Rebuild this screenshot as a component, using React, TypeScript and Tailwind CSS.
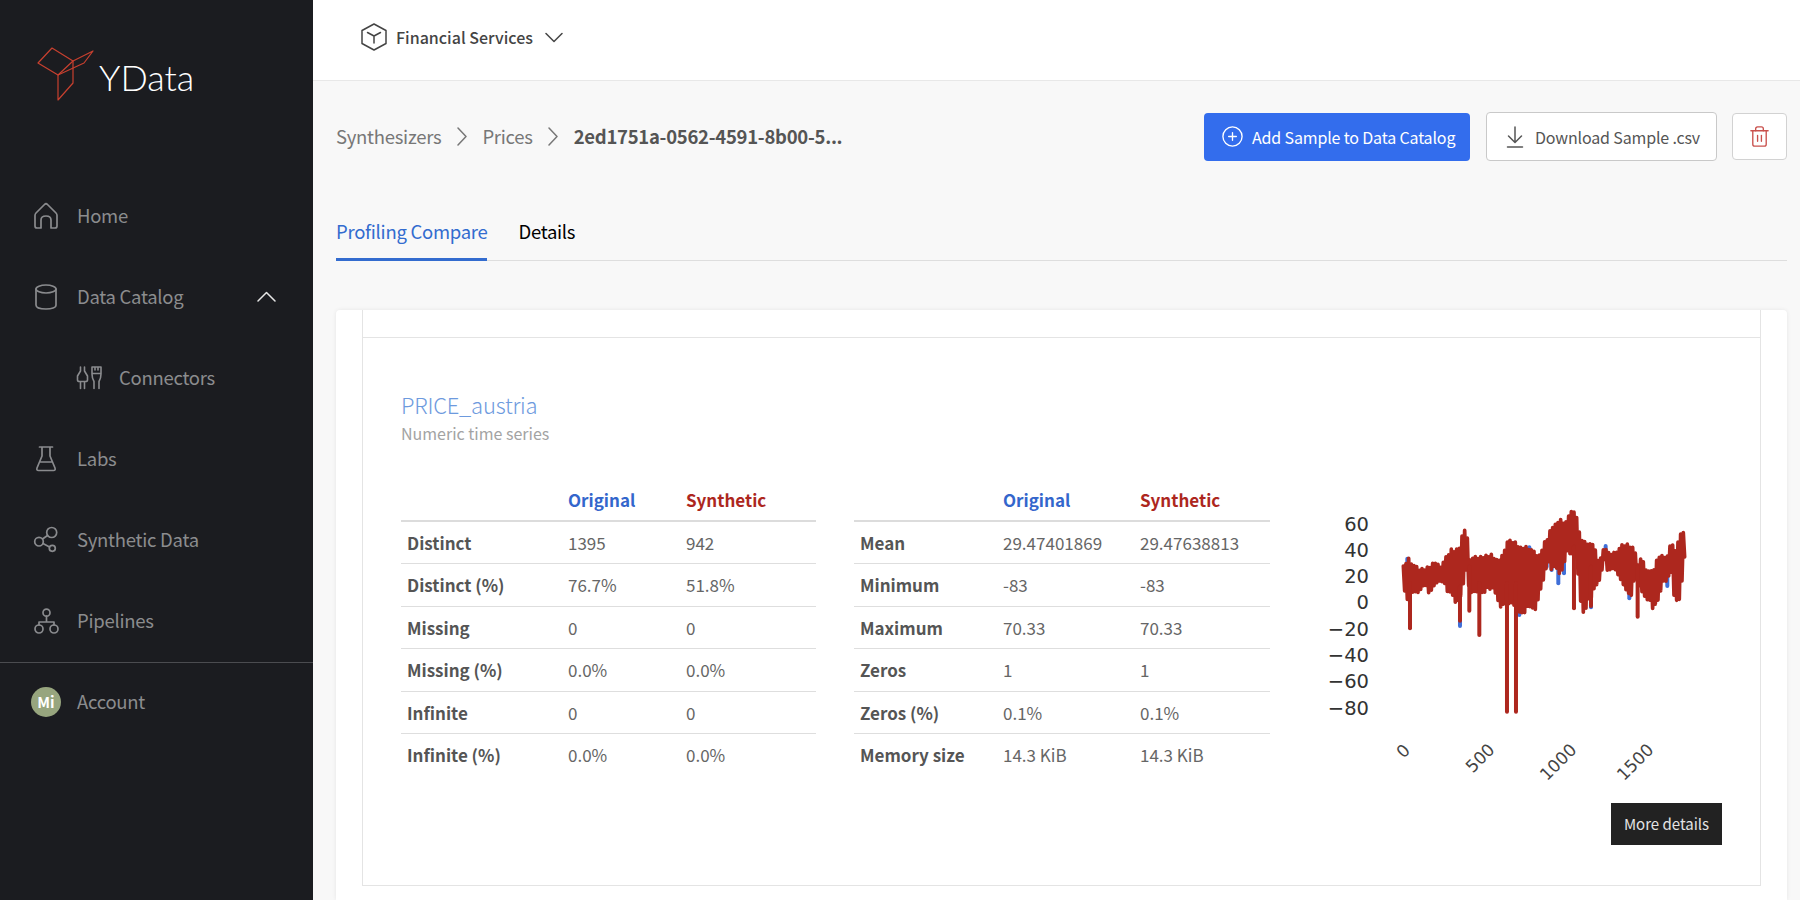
import { CirclePlus, Trash2 } from "lucide-react";

const navClass = "flex h-[81px] items-center text-[18.5px] tracking-[-0.015em] text-[#8b8c8e]";
const crumbClass = "text-[18.5px] tracking-[-0.015em] text-[#777]";

// top and bottom of the price band, in chart units
const band: [number, number, number][] = [
  [70, 200, 280], [85, 175, 290], [100, 195, 270], [115, 210, 280], [130, 210, 265], [150, 200, 270],
  [165, 185, 250], [180, 200, 245], [195, 180, 260], [215, 150, 270], [225, 155, 305], [240, 140, 300],
  [252, 80, 250], [262, 115, 200], [268, 175, 270], [285, 175, 270], [298, 175, 280], [315, 170, 285],
  [335, 165, 250], [350, 180, 285], [360, 175, 325], [375, 155, 315], [382, 125, 300], [395, 125, 300],
  [408, 130, 320], [420, 145, 340], [435, 140, 345], [450, 145, 310], [467, 165, 325], [480, 170, 275],
  [490, 135, 245], [503, 115, 195], [515, 80, 200], [525, 75, 190], [540, 55, 225], [550, 75, 205],
  [565, 55, 150], [575, 30, 150], [590, 50, 170], [600, 110, 295], [612, 125, 350], [628, 130, 300],
  [645, 145, 250], [655, 190, 250], [675, 140, 180], [685, 160, 235], [700, 160, 190], [725, 140, 245],
  [740, 135, 280], [750, 140, 295], [765, 150, 220], [773, 200, 240], [783, 170, 270], [800, 210, 305],
  [818, 220, 315], [835, 170, 295], [850, 170, 245], [862, 170, 250], [872, 125, 215], [885, 150, 295],
  [900, 110, 295], [915, 90, 165],
];

const spikes: [number, number, number][] = [
  [90, 250, 385], [240, 260, 362], [268, 200, 332], [298, 250, 405], [381, 250, 635], [408, 250, 635],
  [582, 140, 325], [633, 200, 318], [773, 200, 350],
];

const blueMarks: [number, number, number][] = [
  [240, 350, 378], [82, 176, 200], [403, 128, 160], [392, 270, 305], [418, 310, 345], [535, 200, 250],
  [515, 170, 210], [500, 150, 200], [748, 270, 295], [633, 300, 322], [862, 230, 258], [677, 138, 170],
  [448, 142, 170], [552, 190, 220],
];

function bandPath() {
  let d = "";
  let up = true;
  for (let x = 70; x <= 915; x += 4) {
    const i = band.findIndex((p) => p[0] >= x);
    const b = band[i];
    const a = band[Math.max(i - 1, 0)];
    const t = b[0] === a[0] ? 0 : (x - a[0]) / (b[0] - a[0]);
    // small fixed jitter so the edges of the band look like data
    const y = up
      ? a[1] + (b[1] - a[1]) * t + ((x * 53) % 11) - 5
      : a[2] + (b[2] - a[2]) * t + ((x * 37) % 23) - 11;
    d += `${d ? "L" : "M"}${x} ${y.toFixed(1)}`;
    up = !up;
  }
  return d;
}

function Chart() {
  const yTicks = ["60", "40", "20", "0", "−20", "−40", "−60", "−80"];
  const xTicks: [string, number, number][] = [
    ["0", 103, 272],
    ["500", 180, 279],
    ["1000", 258, 283],
    ["1500", 335, 283],
  ];
  return (
    <svg width="400" height="324" className="ml-[30px] shrink-0" style={{ fontFamily: "'DejaVu Sans', sans-serif" }}>
      {yTicks.map((t, i) => (
        <text key={t} x="69" y={45 + i * 26.3} fontSize="19.5" fill="#333" textAnchor="end" dominantBaseline="central">
          {t}
        </text>
      ))}
      {xTicks.map(([t, x, y]) => (
        <text key={t} x={x} y={y} fontSize="17" fill="#444" textAnchor="middle" dominantBaseline="central" transform={`rotate(-45 ${x} ${y})`}>
          {t}
        </text>
      ))}
      <g transform="translate(80 21) scale(0.3333)" fill="none" strokeLinecap="round" strokeLinejoin="round">
        {blueMarks.map(([x, a, b]) => (
          <path key={`${x}-${a}`} d={`M${x} ${a}L${x} ${b}`} stroke="#3f6fd8" strokeWidth="12" />
        ))}
        <path d={bandPath()} stroke="#ad271e" strokeWidth="11" />
        {spikes.map(([x, a, b]) => (
          <path key={x} d={`M${x} ${a}L${x} ${b}`} stroke="#ad271e" strokeWidth="12" />
        ))}
      </g>
    </svg>
  );
}

function StatsTable({ rows, className }: { rows: string[][]; className: string }) {
  return (
    <table className={`border-collapse text-[17px] ${className}`}>
      <thead>
        <tr className="h-[42px] border-b-2 border-[#dcdcdc]">
          <th />
          <th className="text-left font-bold text-[#3366cc]">Original</th>
          <th className="text-left font-bold text-[#ad271e]">Synthetic</th>
        </tr>
      </thead>
      <tbody>
        {rows.map((r) => (
          <tr key={r[0]} className="h-[42.5px] border-b border-[#dedede] last:border-b-0">
            <td className="pl-[6px] font-bold text-[#555]">{r[0]}</td>
            <td className="text-[#666]">{r[1]}</td>
            <td className="text-[#666]">{r[2]}</td>
          </tr>
        ))}
      </tbody>
    </table>
  );
}

const leftRows = [
  ["Distinct", "1395", "942"],
  ["Distinct (%)", "76.7%", "51.8%"],
  ["Missing", "0", "0"],
  ["Missing (%)", "0.0%", "0.0%"],
  ["Infinite", "0", "0"],
  ["Infinite (%)", "0.0%", "0.0%"],
];

const rightRows = [
  ["Mean", "29.47401869", "29.47638813"],
  ["Minimum", "-83", "-83"],
  ["Maximum", "70.33", "70.33"],
  ["Zeros", "1", "1"],
  ["Zeros (%)", "0.1%", "0.1%"],
  ["Memory size", "14.3 KiB", "14.3 KiB"],
];

function Chevron({ d, w, h, color }: { d: string; w: number; h: number; color: string }) {
  return (
    <svg width={w} height={h} viewBox={`0 0 ${w} ${h}`} fill="none" stroke={color} strokeWidth="1.5" strokeLinecap="round" strokeLinejoin="round">
      <path d={d} />
    </svg>
  );
}

function NavIcon({ children }: { children: React.ReactNode }) {
  return (
    <svg width="26" height="28" viewBox="0 0 26 28" fill="none" stroke="#8a8b8e" strokeWidth="1.7" strokeLinecap="round" strokeLinejoin="round" className="shrink-0">
      {children}
    </svg>
  );
}

export default function App() {
  return (
    <div className="flex h-[900px] w-[1800px] overflow-hidden bg-[#f8f8f8] font-['Noto_Sans_CJK_JP','Noto_Sans',sans-serif]">
      <aside className="w-[313px] shrink-0 bg-[#1b1c20]">
        <div className="flex h-[175.5px] items-start pl-[37px] pt-[47px]">
          <svg width="58" height="54" viewBox="0 0 58 54" fill="none" stroke="#c8402f" strokeWidth="1.2" strokeLinejoin="round">
            <path d="M1 16L15 1L36 14L21 28Z" />
            <path d="M36 14L56 4L47 16L21 28" />
            <path d="M21 28V53L36 36V14" />
          </svg>
          <span className="ml-[4px] mt-[10px] font-['Lato',sans-serif] text-[36px] font-light leading-[40px] text-white">YData</span>
        </div>

        <nav className="border-b border-[#4b4c50]">
          <div className={`${navClass} pl-[33px]`}>
            <NavIcon>
              <path d="M2 13.500Q2 12 3 11L11.500 2.500Q13 1 14.500 2.500L23 11Q24 12 24 13.500V24Q24 26 22 26H18V18Q18 14 13 14Q8 14 8 18V26H4Q2 26 2 24Z" />
            </NavIcon>
            <span className="ml-[18px]">Home</span>
          </div>
          <div className={`${navClass} pl-[33px]`}>
            <NavIcon>
              <ellipse cx="13" cy="6" rx="10" ry="4" />
              <path d="M3 6V22C3 24.500 7.500 26 13 26C18.500 26 23 24.500 23 22V6" />
            </NavIcon>
            <span className="ml-[18px]">Data Catalog</span>
            <span className="ml-[74px] flex">
              <Chevron d="M1 10L9.500 1.500L18 10" w={19} h={12} color="#e6e6e6" />
            </span>
          </div>
          <div className={`${navClass} pl-[76px]`}>
            <svg width="27" height="24" viewBox="0 0 27 24" fill="none" stroke="#8a8b8e" strokeWidth="1.6" strokeLinecap="round" strokeLinejoin="round" className="shrink-0">
              <path d="M4.500 1V5M8.500 1V5M4.500 5L1.500 10V14Q1.500 15.500 3.500 15.500H9.500Q11.500 15.500 11.500 14V10L8.500 5M4.500 15.500V22.500M8.500 15.500V22.500" />
              <path d="M16 1H25V8Q25 12 23 15.500V22.500M16 1V8Q16 12 18 15.500V22.500M16 7.500H25M19 1V4M22 1V4" />
            </svg>
            <span className="ml-[16px]">Connectors</span>
          </div>
          <div className={`${navClass} pl-[33px]`}>
            <NavIcon>
              <path d="M6.500 2H19.500M9 2V11L4 23C3.500 24.500 4 25.500 5.500 25.500H20.500C22 25.500 22.500 24.500 22 23L17 11V2M6.500 17H19.500" />
            </NavIcon>
            <span className="ml-[18px]">Labs</span>
          </div>
          <div className={`${navClass} pl-[33px]`}>
            <NavIcon>
              <circle cx="6" cy="15.700" r="4.300" />
              <circle cx="18.700" cy="6.500" r="5" />
              <circle cx="19.300" cy="22.300" r="3" />
              <path d="M9.500 13L14.500 9.500M10 17.500L16.500 21" />
            </NavIcon>
            <span className="ml-[18px]">Synthetic Data</span>
          </div>
          <div className={`${navClass} pl-[33px]`}>
            <NavIcon>
              <circle cx="13.500" cy="5.700" r="3.500" />
              <circle cx="6" cy="22" r="4" />
              <circle cx="21" cy="22" r="4" />
              <path d="M13.500 9.200V15M6 18V15H21V18" />
            </NavIcon>
            <span className="ml-[18px]">Pipelines</span>
          </div>
        </nav>

        <div className={`${navClass} pb-[2px] pl-[31px]`}>
          <span className="flex h-[30px] w-[30px] items-center justify-center rounded-full bg-[#97a57e] text-[15px] font-bold tracking-normal text-white">Mi</span>
          <span className="ml-[16px]">Account</span>
        </div>
      </aside>

      <main className="flex min-w-0 flex-1 flex-col">
        <header className="flex h-[81px] shrink-0 items-center border-b border-[#e8e8e8] bg-white pb-[6px] pl-[48px]">
          <svg width="26" height="28" viewBox="0 0 26 28" fill="none" stroke="#444" strokeWidth="1.5" strokeLinejoin="round" strokeLinecap="round">
            <path d="M13 1L25 7.500V20.500L13 27L1 20.500V7.500Z" />
            <path d="M6.500 9.500L13 13L19.500 9.500M13 13V20" />
          </svg>
          <span className="ml-[9px] text-[16px] font-medium text-[#444]">Financial Services</span>
          <span className="ml-[12px] flex">
            <Chevron d="M1 1.500L9 9.500L17 1.500" w={18} h={11} color="#444" />
          </span>
        </header>

        <div className="flex flex-1 flex-col pl-[23px] pr-[13px] pt-[31px]">
          <div className="flex items-center">
            <span className={crumbClass}>Synthesizers</span>
            <span className="ml-[16px] flex">
              <Chevron d="M1 1L9 9.500L1 18" w={10} h={19} color="#777" />
            </span>
            <span className={`${crumbClass} ml-[15px]`}>Prices</span>
            <span className="ml-[15px] flex">
              <Chevron d="M1 1L9 9.500L1 18" w={10} h={19} color="#777" />
            </span>
            <span className="ml-[16px] text-[18.5px] font-bold tracking-[-0.015em] text-[#555]">2ed1751a-0562-4591-8b00-5...</span>

            <button className="ml-auto flex h-[48px] w-[266px] items-center whitespace-nowrap rounded-[4px] bg-[#336ded] pl-[17px] text-[16px] tracking-[-0.01em] text-white">
              <CirclePlus size={23} strokeWidth={1.4} />
              <span className="ml-[8px]">Add Sample to Data Catalog</span>
            </button>
            <button className="ml-[16px] flex h-[49px] w-[231px] items-center whitespace-nowrap rounded-[4px] border border-[#c9c9c9] bg-white pl-[19px] text-[16px] tracking-[-0.01em] text-[#555]">
              <svg width="18" height="22" viewBox="0 0 18 22" fill="none" stroke="#555" strokeWidth="1.5" strokeLinecap="round" strokeLinejoin="round">
                <path d="M9 1V16M2.500 10L9 16.500L15.500 10M1.500 21H16.500" />
              </svg>
              <span className="ml-[11px]">Download Sample .csv</span>
            </button>
            <button className="ml-[15px] flex h-[47px] w-[55px] items-center justify-center rounded-[4px] border border-[#d2d2d2] bg-white">
              <Trash2 size={23} strokeWidth={1.4} color="#c9504c" />
            </button>
          </div>

          <div className="mt-[45px] flex h-[55px] items-start gap-[31px] border-b border-[#dedede] text-[18.5px] tracking-[-0.015em]">
            <span className="h-[55px] border-b-[3px] border-[#336ccf] pt-[9px] leading-[32px] text-[#336ccf]">Profiling Compare</span>
            <span className="pt-[9px] leading-[32px] text-black">Details</span>
          </div>

          <section className="mt-[49px] flex-1 rounded-t-[4px] bg-white px-[26px] shadow-[0_0_4px_rgba(0,0,0,0.08)]">
            <div className="h-[576px] border-x border-b border-[#e4e4e4]">
              <div className="h-[28px] border-b border-[#e4e4e4]" />
              <div className="pl-[38px] pr-[38px] pt-[50px]">
                <h2 className="text-[22px] font-light leading-[32px] tracking-[-0.01em] text-[#6d9ade]">PRICE_austria</h2>
                <p className="mt-[1px] text-[16px] leading-[24px] text-[#a3a3a3]">Numeric time series</p>
                <div className="mt-[34px] flex items-start">
                  <StatsTable rows={leftRows} className="w-[415px] shrink-0 [&_td:first-child]:w-[167px] [&_td:nth-child(2)]:w-[118px]" />
                  <StatsTable rows={rightRows} className="ml-[38px] w-[416px] shrink-0 [&_td:first-child]:w-[149px] [&_td:nth-child(2)]:w-[137px]" />
                  <Chart />
                </div>
                <div className="flex justify-end">
                  <button className="h-[42px] w-[111px] bg-[#222] text-[15px] text-[#e4e4e4]">More details</button>
                </div>
              </div>
            </div>
          </section>
        </div>
      </main>
    </div>
  );
}
